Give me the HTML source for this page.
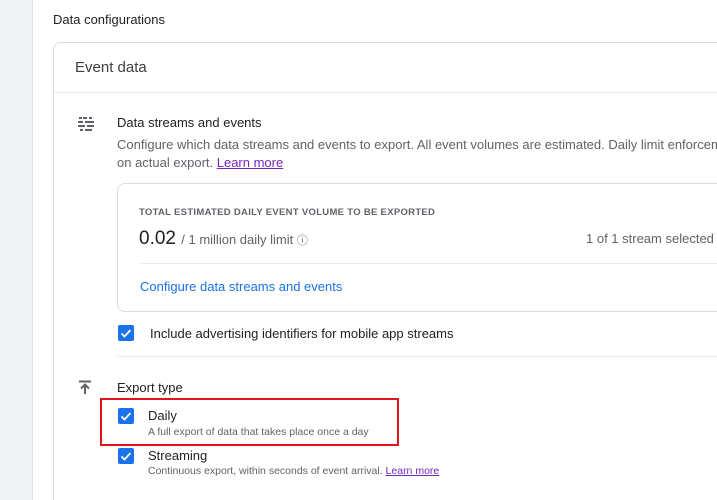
<!DOCTYPE html><html><head><style>
html,body{margin:0;width:717px;height:500px;overflow:hidden}
body{background:#fff;font-family:"Liberation Sans",sans-serif;position:relative;color:#202124}
#w{position:absolute;left:0;top:0;width:717px;height:500px;overflow:hidden}
.a{position:absolute;white-space:nowrap}
.cb{position:absolute;width:16px;height:16px;background:#1a73e8;border-radius:2px}
.cb svg{position:absolute;left:0;top:0}
</style></head><body><div id="w">
<div class="a" style="left:0;top:0;width:32px;height:500px;background:#f1f3f4;border-right:1px solid #e3e3e3"></div>
<div class="a" style="left:53px;top:12px;font-size:13px;">Data configurations</div>
<div class="a" style="left:53px;top:42px;width:700px;height:480px;border:1px solid #dadce0;border-radius:8px"></div>
<div class="a" style="left:75px;top:59px;font-size:15px;color:#3c4043">Event data</div>
<div class="a" style="left:54px;top:92px;width:670px;height:1px;background:#e8eaed"></div>
<svg class="a" style="left:78px;top:117px" width="16" height="15" viewBox="0 0 16 15" fill="#5f6368"><rect x="1" y="0" width="3" height="2"/><rect x="5" y="0" width="4" height="2"/><rect x="11" y="0" width="3" height="2"/><rect x="0" y="4" width="5" height="2"/><rect x="7" y="4" width="9" height="2"/><rect x="0" y="8" width="7" height="2"/><rect x="9" y="8" width="7" height="2"/><rect x="2" y="12" width="3" height="2"/><rect x="7" y="12" width="7" height="2"/></svg>
<div class="a" style="left:117px;top:115px;font-size:13px;">Data streams and events</div>
<div class="a" style="left:117px;top:136px;font-size:13px;color:#5f6368;line-height:18px">Configure which data streams and events to export. All event volumes are estimated. Daily limit enforcement is based<br>on actual export. <span style="color:#7627bb;text-decoration:underline">Learn more</span></div>
<div class="a" style="left:117px;top:183px;width:640px;height:127px;border:1px solid #dadce0;border-radius:8px"></div>
<div class="a" style="left:139px;top:207px;font-size:9.5px;color:#5f6368;letter-spacing:0.3px;font-weight:bold">TOTAL ESTIMATED DAILY EVENT VOLUME TO BE EXPORTED</div>
<div class="a" style="left:139px;top:228px;font-size:19px;">0.02 <span style="font-size:13px;color:#5f6368">/ 1 million daily limit <span style="font-size:11px">ⓘ</span></span></div>
<div class="a" style="left:586px;top:231px;font-size:13px;color:#5f6368">1 of 1 stream selected</div>
<div class="a" style="left:140px;top:263px;width:600px;height:1px;background:#e8eaed"></div>
<div class="a" style="left:140px;top:279px;font-size:13px;color:#1a73e8">Configure data streams and events</div>
<div class="cb" style="left:118px;top:325px"><svg width="16" height="16"><path d="M3.5 8.5l3 3 6-6.5" stroke="#fff" stroke-width="1.8" fill="none"/></svg></div>
<div class="a" style="left:150px;top:326px;font-size:13px;">Include advertising identifiers for mobile app streams</div>
<div class="a" style="left:117px;top:356px;width:620px;height:1px;background:#e8eaed"></div>
<svg class="a" style="left:78px;top:380px" width="14" height="15" viewBox="0 0 14 15" fill="none" stroke="#5f6368" stroke-width="2"><path d="M1 1.5h12M7 14V5M3 8.5l4-4 4 4"/></svg>
<div class="a" style="left:117px;top:380px;font-size:13px;">Export type</div>
<div class="a" style="left:100px;top:398px;width:295px;height:44px;border:2px solid #e0141b"></div>
<div class="cb" style="left:118px;top:408px"><svg width="16" height="16"><path d="M3.5 8.5l3 3 6-6.5" stroke="#fff" stroke-width="1.8" fill="none"/></svg></div>
<div class="a" style="left:148px;top:408px;font-size:13px;">Daily</div>
<div class="a" style="left:148px;top:426px;font-size:10.5px;color:#5f6368">A full export of data that takes place once a day</div>
<div class="cb" style="left:118px;top:448px"><svg width="16" height="16"><path d="M3.5 8.5l3 3 6-6.5" stroke="#fff" stroke-width="1.8" fill="none"/></svg></div>
<div class="a" style="left:148px;top:448px;font-size:13px;">Streaming</div>
<div class="a" style="left:148px;top:465px;font-size:10.5px;color:#5f6368">Continuous export, within seconds of event arrival. <span style="color:#7627bb;text-decoration:underline">Learn more</span></div>
</div></body></html>
